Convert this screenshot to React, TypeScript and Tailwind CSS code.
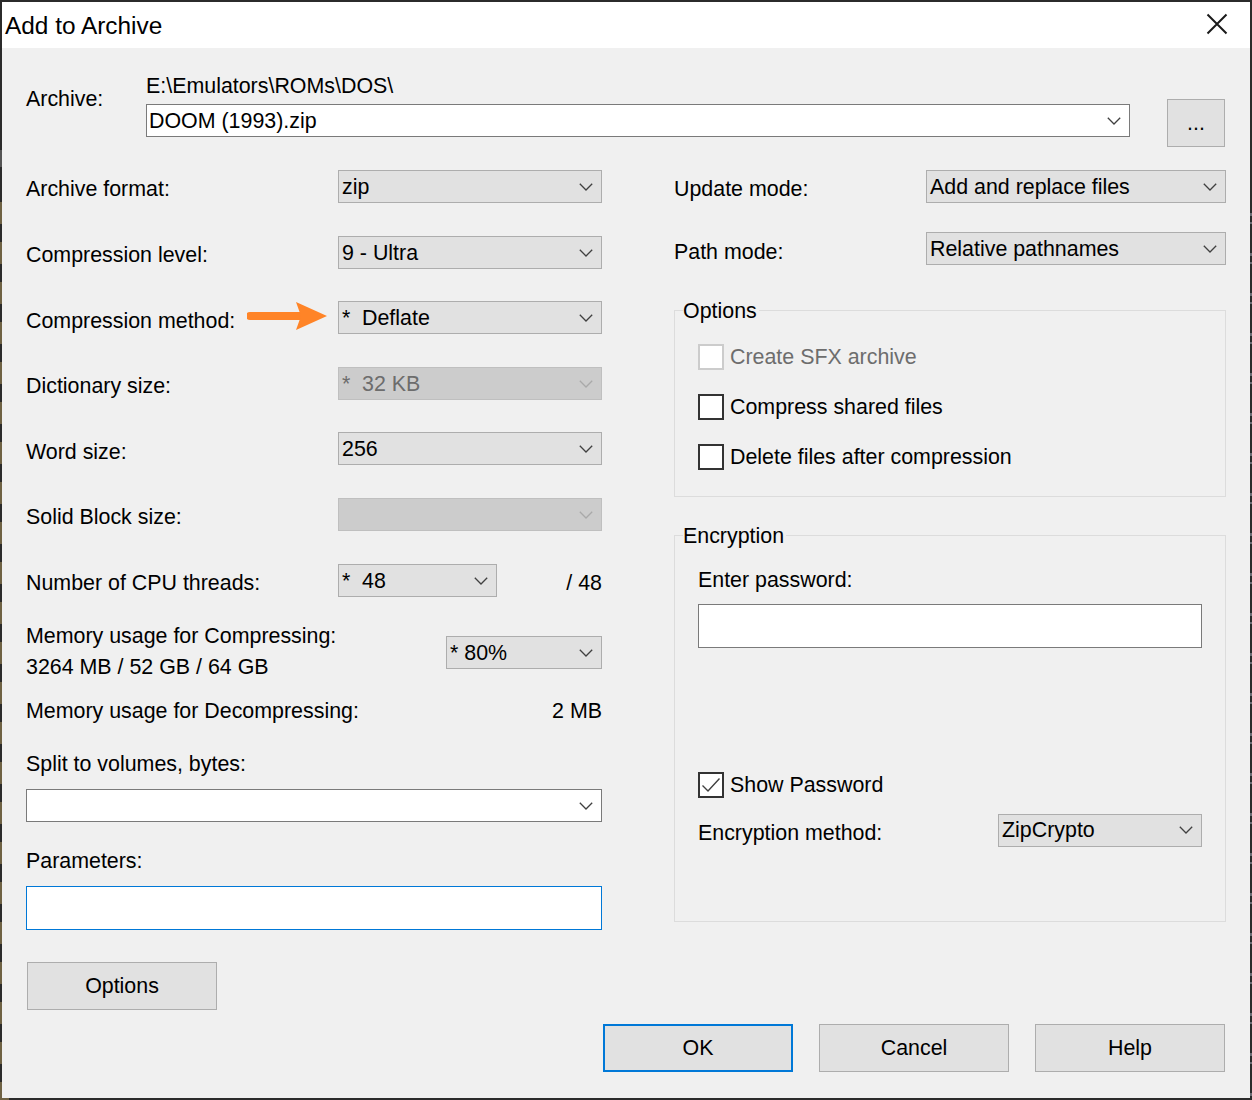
import React from "react";

function Chevron({ disabled }: { disabled?: boolean }) {
  return (
    <svg width="14" height="8" viewBox="0 0 14 8" fill="none" className="shrink-0">
      <path d="M0.8 0.8 L7 7 L13.2 0.8" stroke={disabled ? "#a9a9a9" : "#404040"} strokeWidth="1.3" />
    </svg>
  );
}

function Combo({ text, star, w, disabled, white, className = "" }: { text?: string; star?: boolean; w: string; disabled?: boolean; white?: boolean; className?: string }) {
  const skin = white
    ? "bg-white border-[#7a7a7a] text-black pl-[2px]"
    : disabled
      ? "bg-[#cccccc] border-[#bfbfbf] text-[#6d6d6d] pl-[3px]"
      : "bg-[#e1e1e1] border-[#adadad] text-black pl-[3px]";
  return (
    <div className={`${w} ${skin} ${className} h-[33px] border flex items-center justify-between pr-[8px] shrink-0`}>
      <span className="whitespace-pre leading-none mt-[2px]">
        {star ? <span className="inline-block w-[20px]">*</span> : null}
        {text}
      </span>
      <Chevron disabled={disabled} />
    </div>
  );
}

function Button({ label, w, focus, className = "" }: { label: string; w: string; focus?: boolean; className?: string }) {
  return (
    <div className={`${w} ${className} h-[48px] bg-[#e1e1e1] flex items-center justify-center shrink-0 ${focus ? "border-2 border-[#0078d7]" : "border border-[#adadad]"}`}>
      {label}
    </div>
  );
}

function Check({ label, disabled, checked }: { label: string; disabled?: boolean; checked?: boolean }) {
  return (
    <div className={`flex items-center h-[26px] ${disabled ? "text-[#6d6d6d]" : "text-black"}`}>
      <div className={`w-[26px] h-[26px] bg-white border-2 flex items-center justify-center shrink-0 ${disabled ? "border-[#cccccc]" : "border-[#333333]"}`}>
        {checked ? (
          <svg width="20" height="16" viewBox="0 0 20 16" fill="none">
            <path d="M1.5 8.5 L7 14 L18.5 1.5" stroke="#404040" strokeWidth="1.4" />
          </svg>
        ) : null}
      </div>
      <span className="ml-[6px]">{label}</span>
    </div>
  );
}

function Row({ label, children, className = "", low }: { label: string; children: React.ReactNode; className?: string; low?: boolean }) {
  return (
    <div className={`flex h-[33px] justify-between items-center ${className}`}>
      <span className={low ? "mt-[8px]" : "mt-[6px]"}>{label}</span>
      {children}
    </div>
  );
}

function Group({ title, h, children, className = "" }: { title: string; h: string; children: React.ReactNode; className?: string }) {
  return (
    <div className={`relative ${h} ${className} border border-[#dcdcdc]`}>
      <span className="absolute left-[8px] -top-[13px] leading-[26px] bg-[#f0f0f0] pr-[2px]">{title}</span>
      {children}
    </div>
  );
}

export default function App() {
  return (
    <div className="w-[1252px] h-[1100px] relative overflow-hidden bg-[#2b2b2b] p-[2px] text-[21.4px] text-black font-['Liberation_Sans',Arial,sans-serif]">
      {/* desktop showing through the window's edge */}
      <div className="absolute left-0 top-[202px] bottom-0 w-[2px] bg-[repeating-linear-gradient(to_bottom,#6f6244_0px,#6f6244_22px,#2b2b2b_22px,#2b2b2b_40px)]"></div>
      <div className="absolute left-0 top-[150px] h-[17px] w-[2px] bg-[#555555]"></div>
      <div className="absolute left-0 bottom-0 h-[2px] w-[9px] bg-[#6f6244]"></div>
      <div className="absolute right-0 top-[200px] bottom-0 w-[2px] bg-[repeating-linear-gradient(to_bottom,#2b2b2b_0px,#2b2b2b_13px,#6b6b74_13px,#6b6b74_16px,#2b2b2b_16px,#2b2b2b_22px,#6b6b74_22px,#6b6b74_24px,#2b2b2b_24px,#2b2b2b_40px)]"></div>

      <div className="h-full bg-[#f0f0f0]">
        <div className="h-[46px] bg-white flex items-center justify-between pl-[3px] pr-[22px]">
          <span className="text-[24.4px] leading-none mt-[2px]">Add to Archive</span>
          <svg width="22" height="22" viewBox="0 0 22 22" fill="none" className="-mt-[2px]">
            <path d="M1.5 1.5 L20.5 20.5 M20.5 1.5 L1.5 20.5" stroke="#1a1a1a" strokeWidth="2" />
          </svg>
        </div>

        <div className="pl-[24px] pr-[24px]">
          <div className="flex h-[122px]">
            <div className="w-[120px] mt-[38px] leading-[26px]">Archive:</div>
            <div className="w-[984px]">
              <div className="h-[26px] mt-[25px] leading-[26px]">E:\Emulators\ROMs\DOS\</div>
              <Combo text="DOOM (1993).zip" w="w-[984px]" white className="mt-[5px]" />
            </div>
            <Button label="..." w="w-[58px]" className="ml-[37px] mt-[51px]" />
          </div>

          <div className="flex">
            <div className="w-[576px]">
              <Row label="Archive format:"><Combo text="zip" w="w-[264px]" /></Row>
              <Row label="Compression level:" className="mt-[33px]"><Combo text="9 - Ultra" w="w-[264px]" /></Row>
              <Row label="Compression method:" low className="mt-[32px] relative">
                <svg width="80" height="28" viewBox="0 0 80 28" fill="none" className="absolute left-[221px] top-[1px]">
                  <path d="M3 14 H55" stroke="#ff8427" strokeWidth="8" strokeLinecap="round" />
                  <path d="M49 0 L80 14 L49 28 L54 14 Z" fill="#ff8427" />
                </svg>
                <Combo text="Deflate" star w="w-[264px]" />
              </Row>
              <Row label="Dictionary size:" className="mt-[33px]"><Combo text="32 KB" star w="w-[264px]" disabled /></Row>
              <Row label="Word size:" low className="mt-[32px]"><Combo text="256" w="w-[264px]" /></Row>
              <Row label="Solid Block size:" className="mt-[33px]"><Combo w="w-[264px]" disabled /></Row>
              <div className="flex h-[33px] items-center mt-[33px]">
                <span className="w-[312px] mt-[6px]">Number of CPU threads:</span>
                <Combo text="48" star w="w-[159px]" />
                <span className="ml-auto mt-[6px]">/ 48</span>
              </div>
              <div className="flex justify-between mt-[24px] h-[60px]">
                <div className="leading-[30px]">
                  <div>Memory usage for Compressing:</div>
                  <div className="mt-[1px]">3264 MB / 52 GB / 64 GB</div>
                </div>
                <Combo text="* 80%" w="w-[156px]" className="mt-[15px]" />
              </div>
              <div className="flex justify-between leading-[30px] mt-[15px]">
                <span>Memory usage for Decompressing:</span>
                <span>2 MB</span>
              </div>
              <div className="leading-[30px] mt-[23px]">Split to volumes, bytes:</div>
              <Combo w="w-[576px]" white className="mt-[10px]" />
              <div className="leading-[30px] mt-[24px]">Parameters:</div>
              <div className="h-[44px] mt-[10px] bg-white border border-[#0078d7]"></div>
              <Button label="Options" w="w-[190px]" className="ml-[1px] mt-[32px]" />
            </div>

            <div className="w-[552px] ml-[72px]">
              <div className="flex justify-between items-center h-[33px]">
                <span className="mt-[6px]">Update mode:</span>
                <Combo text="Add and replace files" w="w-[300px]" />
              </div>
              <div className="flex justify-between items-center h-[33px] mt-[29px]">
                <span className="mt-[8px]">Path mode:</span>
                <Combo text="Relative pathnames" w="w-[300px]" />
              </div>
              <Group title="Options" h="h-[187px]" className="mt-[45px] pl-[23px] pt-[33px]">
                <Check label="Create SFX archive" disabled />
                <div className="mt-[24px]"><Check label="Compress shared files" /></div>
                <div className="mt-[24px]"><Check label="Delete files after compression" /></div>
              </Group>
              <Group title="Encryption" h="h-[387px]" className="mt-[38px] px-[23px]">
                <div className="leading-[30px] mt-[29px]">Enter password:</div>
                <div className="h-[44px] w-[504px] mt-[9px] bg-white border border-[#7a7a7a]"></div>
                <div className="mt-[124px]"><Check label="Show Password" checked /></div>
                <div className="flex justify-between items-center w-[504px] mt-[13px]">
                  <span className="mt-[6px]">Encryption method:</span>
                  <Combo text="ZipCrypto" w="w-[204px]" />
                </div>
              </Group>
            </div>
          </div>

          <div className="flex justify-end gap-[26px] mt-[14px] mr-[1px]">
            <Button label="OK" w="w-[190px]" focus />
            <Button label="Cancel" w="w-[190px]" />
            <Button label="Help" w="w-[190px]" />
          </div>
        </div>
      </div>
    </div>
  );
}
